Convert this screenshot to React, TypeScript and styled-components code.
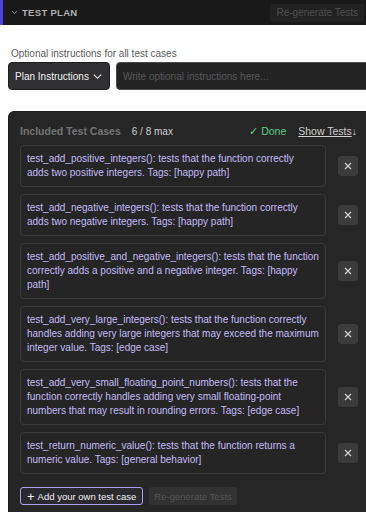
import React from 'react';
import styled, { createGlobalStyle } from 'styled-components';

// each case is kept as the lines it shows in the panel
const cases = [
  [
    'test_add_positive_integers(): tests that the function correctly',
    'adds two positive integers. Tags: [happy path]',
  ],
  [
    'test_add_negative_integers(): tests that the function correctly',
    'adds two negative integers. Tags: [happy path]',
  ],
  [
    'test_add_positive_and_negative_integers(): tests that the function',
    'correctly adds a positive and a negative integer. Tags: [happy',
    'path]',
  ],
  [
    'test_add_very_large_integers(): tests that the function correctly',
    'handles adding very large integers that may exceed the maximum',
    'integer value. Tags: [edge case]',
  ],
  [
    'test_add_very_small_floating_point_numbers(): tests that the',
    'function correctly handles adding very small floating-point',
    'numbers that may result in rounding errors. Tags: [edge case]',
  ],
  [
    'test_return_numeric_value(): tests that the function returns a',
    'numeric value. Tags: [general behavior]',
  ],
];

function App() {
  return (
    <Page>
      <Global />
      <Header>
        <HeaderTitle>
          <svg width="7" height="7" viewBox="0 0 10 10">
            <path d="M1.5 3 L5 6.5 L8.5 3" fill="none" stroke="#9a9a9a" strokeWidth="1.3" />
          </svg>
          TEST PLAN
        </HeaderTitle>
        <GhostButton>Re-generate Tests</GhostButton>
      </Header>

      <Instructions>
        <Label>Optional instructions for all test cases</Label>
        <InputRow>
          <Select>
            Plan Instructions
            <svg width="11" height="11" viewBox="0 0 12 12">
              <path d="M2 4 L6 8 L10 4" fill="none" stroke="#e6e6e6" strokeWidth="1.2" />
            </svg>
          </Select>
          <TextInput placeholder="Write optional instructions here..." />
        </InputRow>
      </Instructions>

      <Panel>
        <PanelHeader>
          <PanelTitle>Included Test Cases</PanelTitle>
          <Count>6 / 8 max</Count>
          <Done>✓ Done</Done>
          <ShowTests>
            <u>Show Tests</u>↓
          </ShowTests>
        </PanelHeader>

        <CaseList>
          {cases.map((lines) => (
            <CaseRow key={lines[0]}>
              <Card>{lines.join('\n')}</Card>
              <RemoveButton>
                <svg width="8" height="8" viewBox="0 0 8 8">
                  <path d="M1 1 L7 7 M7 1 L1 7" stroke="#d8d8d8" strokeWidth="1.1" />
                </svg>
              </RemoveButton>
            </CaseRow>
          ))}
        </CaseList>

        <Footer>
          <AddButton>
            <span>+</span> Add your own test case
          </AddButton>
          <FooterGhost>Re-generate Tests</FooterGhost>
        </Footer>
      </Panel>
    </Page>
  );
}

export default App;

const Global = createGlobalStyle`
  body { margin: 0; background: #fff; font-family: "Liberation Sans", Arial, sans-serif; }
`;

const Page = styled.div`
  width: 366px;
  height: 512px;
  overflow: hidden;
  background: #fff;
`;

const Header = styled.div`
  height: 25px;
  display: flex;
  align-items: center;
  justify-content: space-between;
  background: #1a1919;
  border-left: 3px solid #4c44d8;
  padding: 0 2px 0 8px;
`;

const HeaderTitle = styled.div`
  display: flex;
  align-items: center;
  gap: 4px;
  color: #b0b0b0;
  font-size: 9.5px;
  font-weight: 700;
  letter-spacing: 0.3px;
`;

const GhostButton = styled.div`
  height: 18px;
  padding: 0 6px;
  display: flex;
  align-items: center;
  background: #232222;
  border-radius: 3px;
  color: #4f4f4f;
  font-size: 10px;
  white-space: nowrap;
`;

const Instructions = styled.div`
  padding: 22px 0 0 8px;
`;

const Label = styled.div`
  color: #5a5a5a;
  font-size: 10px;
  padding-left: 3px;
  height: 14px;
  line-height: 14px;
  margin-bottom: 1px;
`;

const InputRow = styled.div`
  display: flex;
  gap: 6px;
`;

const Select = styled.div`
  flex-shrink: 0;
  width: 102px;
  height: 28px;
  box-sizing: border-box;
  display: flex;
  align-items: center;
  justify-content: space-between;
  padding: 0 6px 0 6px;
  background: #303033;
  border: 1px solid #1e1e1e;
  border-radius: 4px;
  color: #f2f2f2;
  font-size: 10px;
  white-space: nowrap;
`;

const TextInput = styled.input`
  flex-shrink: 0;
  width: 270px;
  height: 28px;
  box-sizing: border-box;
  background: #232323;
  border: 1px solid #4a4a4a;
  border-radius: 4px;
  padding: 0 6px;
  font-family: inherit;
  font-size: 10px;
  color: #ddd;
  outline: none;
  &::placeholder { color: #575757; }
`;

const Panel = styled.div`
  margin: 21px 0 0 8px;
  width: 380px;
  height: 420px;
  box-sizing: border-box;
  background: #262626;
  border: 1px solid #1c1c1c;
  border-radius: 6px 0 0 0;
  padding: 10px 0 0 11px;
`;

const PanelHeader = styled.div`
  display: flex;
  align-items: center;
  height: 18px;
  width: 337px;
  margin-bottom: 5px;
`;

const PanelTitle = styled.div`
  color: #747474;
  font-size: 10.5px;
  font-weight: 700;
  margin-right: 11px;
`;

const Count = styled.div`
  color: #cfcfcf;
  font-size: 10px;
`;

const Done = styled.div`
  margin-left: auto;
  color: #5fcd86;
  font-size: 10.5px;
  margin-right: 12px;
`;

const ShowTests = styled.div`
  color: #cfcfcf;
  font-size: 10.5px;
`;

const CaseList = styled.div`
  display: flex;
  flex-direction: column;
  gap: 7px;
`;

const CaseRow = styled.div`
  display: flex;
  align-items: center;
  gap: 12px;
`;

const Card = styled.div`
  width: 306px;
  box-sizing: border-box;
  padding: 6px 3px 6px 6px;
  border: 1px solid #3a3a3a;
  border-radius: 4px;
  background: #252525;
  color: #c4bcf6;
  font-size: 10px;
  line-height: 14px;
  white-space: pre;
`;

const RemoveButton = styled.div`
  width: 20px;
  height: 20px;
  display: flex;
  align-items: center;
  justify-content: center;
  background: #3b3b3b;
  border-radius: 3px;
`;

const Footer = styled.div`
  display: flex;
  gap: 6px;
  margin-top: 13px;
`;

const AddButton = styled.div`
  height: 18px;
  box-sizing: border-box;
  padding: 0 6px;
  display: flex;
  align-items: center;
  gap: 3px;
  border: 1px solid #a99ff2;
  border-radius: 3px;
  background: #2a2a2e;
  color: #f0f0f0;
  font-size: 9.5px;
  white-space: nowrap;
  span { font-size: 13px; line-height: 1; }
`;

const FooterGhost = styled.div`
  height: 18px;
  padding: 0 5px;
  display: flex;
  align-items: center;
  background: #323232;
  border-radius: 3px;
  color: #555;
  font-size: 9.5px;
  white-space: nowrap;
`;
